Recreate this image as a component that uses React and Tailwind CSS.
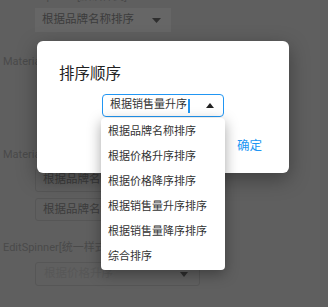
export default function App() {
  const items = [
    "根据品牌名称排序",
    "根据价格升序排序",
    "根据价格降序排序",
    "根据销售量升序排序",
    "根据销售量降序排序",
    "综合排序",
  ];

  return (
    <div
      className="relative w-[328px] h-[307px] overflow-hidden bg-[#5f5f5f]"
      style={{ fontFamily: 'Roboto, "Noto Sans CJK SC", sans-serif' }}
    >
      {/* page under the dim layer */}
      <div className="h-[8px] overflow-hidden pl-[40px]">
        <div className="-mt-[10px] text-[11px] leading-[14px] text-[#4a4a4a]">
          Spinner[默认样式]:
        </div>
      </div>
      <div className="ml-[35px] w-[136px] h-[24px] bg-[#666666] flex items-center justify-between pl-[7px] pr-[10px]">
        <span className="text-[11.5px] text-[#3c3c3c]">根据品牌名称排序</span>
        <svg width="9" height="5" viewBox="0 0 9 5">
          <path d="M0 0h9L4.5 5z" fill="#2e2e2e" />
        </svg>
      </div>
      <div className="mt-[23px] ml-[3px] text-[11px] leading-[14px] text-[#4a4a4a]">
        MaterialSpinner[默认样式]:
      </div>
      <div className="mt-[79px] ml-[3px] text-[11px] leading-[14px] text-[#4a4a4a]">
        MaterialSpinner[统一样式]:
      </div>
      <div className="mt-[6px] ml-[35px] w-[165px] h-[24px] border border-[#565656] rounded-[3px] flex items-center pl-[7px]">
        <span className="text-[11.5px] text-[#3c3c3c]">根据品牌名称排序</span>
      </div>
      <div className="mt-[6px] ml-[35px] w-[165px] h-[23px] border border-[#565656] rounded-[3px] flex items-center pl-[7px]">
        <span className="text-[11.5px] text-[#3c3c3c]">根据品牌名称排序</span>
      </div>
      <div className="mt-[20px] ml-[3px] text-[11px] leading-[14px] text-[#4a4a4a]">
        EditSpinner[统一样式]:
      </div>
      <div className="mt-[7px] ml-[35px] w-[165px] h-[24px] border border-[#565656] rounded-[3px] flex items-center justify-between pl-[8px] pr-[11px]">
        <span className="text-[11.5px] text-[#575757]">根据价格升序</span>
        <svg width="8" height="5" viewBox="0 0 8 5">
          <path d="M0 0h8L4 5z" fill="#2e2e2e" />
        </svg>
      </div>

      {/* dialog */}
      <div className="absolute left-[37px] top-[41px] w-[252px] h-[132px] bg-white rounded-[6px] shadow-[0_6px_20px_rgba(0,0,0,0.35)] pt-[23px] pl-[22px] pr-[27px]">
        <div className="text-[15.5px] leading-[20px] text-[#222]">排序顺序</div>
        <div className="mt-[10px] ml-[43px] w-[122px] h-[23px] border-[1.5px] border-[#2196f3] rounded-[4px] flex items-center justify-between pl-[7px] pr-[9px]">
          <div className="flex items-center">
            <span className="text-[11px] text-[#333]">根据销售量升序</span>
            <span className="w-[1.5px] h-[14px] bg-[#2196f3] ml-[1px]" />
          </div>
          <svg width="8" height="5" viewBox="0 0 8 5">
            <path d="M4 0l4 5H0z" fill="#222" />
          </svg>
        </div>
        <div className="mt-[21px] flex justify-end">
          <span className="text-[12.5px] leading-[16px] text-[#2196f3]">确定</span>
        </div>
      </div>

      {/* dropdown */}
      <div className="absolute left-[101px] top-[118px] w-[124px] bg-white rounded-[4px] shadow-[0_4px_14px_rgba(0,0,0,0.35)] pt-[2px]">
        {items.map((t) => (
          <div key={t} className="h-[25px] flex items-center pl-[7px] text-[11px] text-[#333]">
            {t}
          </div>
        ))}
      </div>
    </div>
  );
}
